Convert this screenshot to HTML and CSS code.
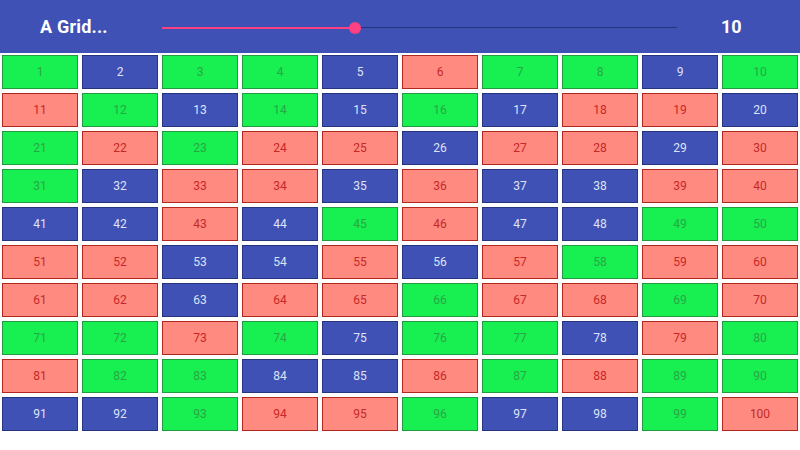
FILE: index.html
```html
<!DOCTYPE html>
<html>
<head>
<meta charset="utf-8">
<link rel="stylesheet" href="styles.css">
</head>
<body>
<header class="toolbar">
  <div class="title">A Grid...</div>
  <div class="slider">
    <div class="track-fill"></div>
    <div class="track-rest"></div>
    <div class="thumb"></div>
  </div>
  <div class="value">10</div>
</header>
<main class="grid">
  <div class="cell g">1</div><div class="cell b">2</div><div class="cell g">3</div><div class="cell g">4</div><div class="cell b">5</div><div class="cell r">6</div><div class="cell g">7</div><div class="cell g">8</div><div class="cell b">9</div><div class="cell g">10</div>
  <div class="cell r">11</div><div class="cell g">12</div><div class="cell b">13</div><div class="cell g">14</div><div class="cell b">15</div><div class="cell g">16</div><div class="cell b">17</div><div class="cell r">18</div><div class="cell r">19</div><div class="cell b">20</div>
  <div class="cell g">21</div><div class="cell r">22</div><div class="cell g">23</div><div class="cell r">24</div><div class="cell r">25</div><div class="cell b">26</div><div class="cell r">27</div><div class="cell r">28</div><div class="cell b">29</div><div class="cell r">30</div>
  <div class="cell g">31</div><div class="cell b">32</div><div class="cell r">33</div><div class="cell r">34</div><div class="cell b">35</div><div class="cell r">36</div><div class="cell b">37</div><div class="cell b">38</div><div class="cell r">39</div><div class="cell r">40</div>
  <div class="cell b">41</div><div class="cell b">42</div><div class="cell r">43</div><div class="cell b">44</div><div class="cell g">45</div><div class="cell r">46</div><div class="cell b">47</div><div class="cell b">48</div><div class="cell g">49</div><div class="cell g">50</div>
  <div class="cell r">51</div><div class="cell r">52</div><div class="cell b">53</div><div class="cell b">54</div><div class="cell r">55</div><div class="cell b">56</div><div class="cell r">57</div><div class="cell g">58</div><div class="cell r">59</div><div class="cell r">60</div>
  <div class="cell r">61</div><div class="cell r">62</div><div class="cell b">63</div><div class="cell r">64</div><div class="cell r">65</div><div class="cell g">66</div><div class="cell r">67</div><div class="cell r">68</div><div class="cell g">69</div><div class="cell r">70</div>
  <div class="cell g">71</div><div class="cell g">72</div><div class="cell r">73</div><div class="cell g">74</div><div class="cell b">75</div><div class="cell g">76</div><div class="cell g">77</div><div class="cell b">78</div><div class="cell r">79</div><div class="cell g">80</div>
  <div class="cell r">81</div><div class="cell g">82</div><div class="cell g">83</div><div class="cell b">84</div><div class="cell b">85</div><div class="cell r">86</div><div class="cell g">87</div><div class="cell r">88</div><div class="cell g">89</div><div class="cell g">90</div>
  <div class="cell b">91</div><div class="cell b">92</div><div class="cell g">93</div><div class="cell r">94</div><div class="cell r">95</div><div class="cell g">96</div><div class="cell b">97</div><div class="cell b">98</div><div class="cell g">99</div><div class="cell r">100</div>
</main>
</body>
</html>
```
FILE: styles.css
```css
* { box-sizing: border-box; }
html, body {
  margin: 0;
  padding: 0;
  background: #ffffff;
  font-family: Roboto, "Liberation Sans", sans-serif;
}
.toolbar {
  height: 53px;
  background: #3f51b5;
  display: flex;
  align-items: center;
  padding-left: 40px;
  color: #ffffff;
}
.title {
  width: 122px;
  font-size: 18px;
  font-weight: 700;
  letter-spacing: 0.2px;
  margin-top: -1px;
}
.slider {
  position: relative;
  width: 515px;
  height: 12px;
  display: flex;
  align-items: center;
  margin-top: 2px;
}
.track-fill {
  width: 37.5%;
  height: 2px;
  background: #ff4081;
}
.track-rest {
  flex: 1;
  height: 1px;
  background: #26337f;
}
.thumb {
  position: absolute;
  left: calc(37.5% - 6px);
  top: 0;
  width: 12px;
  height: 12px;
  border-radius: 50%;
  background: #ff4081;
}
.value {
  margin-left: 44px;
  font-size: 18px;
  font-weight: 700;
  margin-top: -1px;
}
.grid {
  display: grid;
  grid-template-columns: repeat(10, 76px);
  grid-auto-rows: 34px;
  gap: 4px;
  padding: 2px;
}
.cell {
  border: 1px solid;
  display: flex;
  align-items: center;
  justify-content: center;
  font-size: 12px;
}
.g {
  background: #17f050;
  border-color: #239a40;
  color: #2aa546;
}
.r {
  background: #ff8a80;
  border-color: #b3261e;
  color: #c62828;
}
.b {
  background: #3f51b5;
  border-color: #26337f;
  color: #dfe3f7;
}
```
